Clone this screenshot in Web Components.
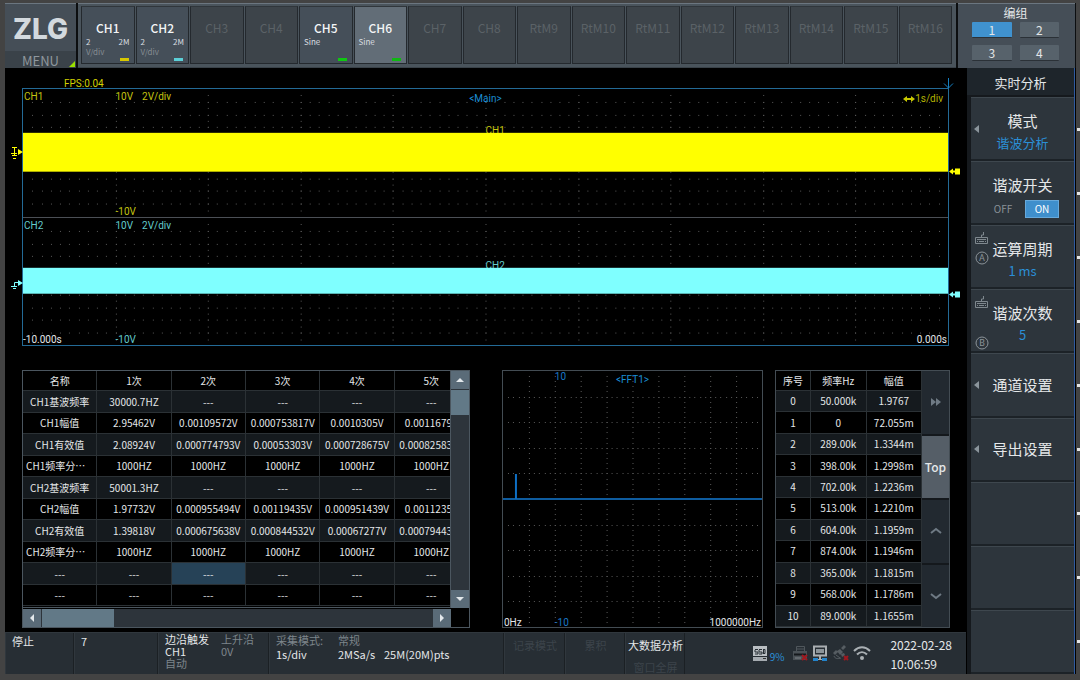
<!DOCTYPE html>
<html lang="zh-CN">
<head>
<meta charset="utf-8">
<meta name="viewport" content="width=device-width, initial-scale=1">
<title>示波器 - 实时分析</title>
<style>
  html, body { margin: 0; height: 100%; background: #434343; }
  body { font-family: "Noto Sans CJK SC", "Noto Sans", sans-serif; color: #e4e7e9; }
</style>
</head>
<body>
<scope-app></scope-app>

<script>
const BASE = `
  *, *::before, *::after { box-sizing: border-box; }
  :host { display: block; box-sizing: border-box; min-width: 0; }
  button { margin: 0; padding: 0; border: 0; background: none; color: inherit; font: inherit; cursor: pointer; }
  svg { display: block; }
`;

function define(tag, css, render) {
  customElements.define(tag, class extends HTMLElement {
    connectedCallback() {
      if (this.shadowRoot) return;
      const root = this.attachShadow({ mode: 'open' });
      root.innerHTML = `<style>${BASE}${css}</style>${render(this)}`;
    }
  });
}

/* ---------- header ---------- */
define('menu-logo', `
  :host { background: #454e57; border-top: 1px solid #6b7680; }
  button { display: flex; flex-direction: column; width: 100%; height: 100%; position: relative; }
  svg { flex: 1; width: 100%; min-height: 0; }
  span { width: 100%; height: 17px; line-height: 19px; background: #3a4249; color: #8f979d; font-size: 13px; }
  i { position: absolute; right: 1px; bottom: 1px; border: 3px solid #9be000; border-left-color: transparent; border-top-color: transparent; }
`, () => `
  <button type="button">
    <svg viewBox="0 0 71 47"><text x="8" y="35" font-family="Inter, sans-serif" font-weight="800" font-size="28" fill="#d3d9de">ZLG</text></svg>
    <span>MENU</span><i></i>
  </button>`);

define('channel-tab', `
  :host { flex: 1 1 0; }
  button { display: grid; grid-template-rows: 18px 10px 10px; width: 100%; height: 100%; padding: 12px 4px 0 4px;
    position: relative; background: #3d444a; border: 1px solid #24292e; border-top-color: #30363b; color: #5b6267; font-size: 12px; line-height: 18px; }
  b { font-weight: inherit; }
  .row { display: flex; justify-content: space-between; font-size: 8px; line-height: 10px; }
  .unit { color: #858d93; }
  :host([on]) button { background: #454f59; color: #f3f5f6; font-weight: 500; }
  :host([selected]) button { background: #626d77; }
  :host([on]) .row { color: #d9dde0; font-weight: 400; }
  :host([on]) .row.unit { color: #858d93; }
  i { position: absolute; right: 5px; bottom: 2px; width: 9px; height: 3px; }
`, el => {
  const a = n => el.getAttribute(n) || '';
  return `<button type="button"><b><slot></slot></b>
    <span class="row"><span>${a('value')}</span><span>${a('rate')}</span></span>
    <span class="row unit">${a('unit')}</span>
    ${a('color') ? `<i style="background:${a('color')}"></i>` : ''}</button>`;
});

define('channel-strip', `
  :host { display: flex; gap: 1px; padding: 2px 4px 3px 3px; background: #4a545c; border-top: 1px solid #6b7680; border-bottom: 1px solid #3a4249; }
`, () => {
  const live = [
    ['CH1', 'on value="2" rate="2M" unit="V/div" color="#d8c800"'],
    ['CH2', 'on value="2" rate="2M" unit="V/div" color="#5cd0d8"'],
    ['CH3', ''], ['CH4', ''],
    ['CH5', 'on value="Sine" color="#0fc812"'],
    ['CH6', 'on selected value="Sine" color="#0fb812"'],
    ['CH7', ''], ['CH8', '']
  ];
  for (let n = 9; n <= 16; n++) live.push([`RtM${n}`, '']);
  return live.map(([name, attrs]) => `<channel-tab ${attrs}>${name}</channel-tab>`).join('');
});

define('group-picker', `
  :host { background: #454e57; border-top: 1px solid #6b7680; padding: 0 16px 0 14px; text-align: center; }
  .title { font-size: 12px; line-height: 18px; }
  .grid { display: grid; grid-template-columns: 1fr 1fr; gap: 7px 8px; }
  button { height: 16px; font-size: 12px; line-height: 16px; background: #57626b; border-bottom: 1px solid #2b3137; border-radius: 1px; }
  button.on { background: #4092cf; }
`, () => `<div class="title">编组</div><div class="grid">
  <button type="button" class="on">1</button><button type="button">2</button>
  <button type="button">3</button><button type="button">4</button></div>`);

/* ---------- plots ---------- */
/* Dotted graticule: ten by ten divisions, drawn as single-pixel dots. */
function graticule(w, h, nx, ny, subX, subY) {
  let d = '';
  for (let r = 1; r < ny; r++)
    for (let c = 1; c < nx * subX; c++) d += `M${Math.round(c * w / (nx * subX))} ${Math.round(r * h / ny)}h1`;
  for (let c = 1; c < nx; c++)
    for (let r = 1; r < ny * subY; r++) d += `M${Math.round(c * w / nx)} ${Math.round(r * h / (ny * subY))}h1`;
  return `<path d="${d}" transform="translate(0 .5)" stroke="#5a5a5a" fill="none"/>`;
}

define('wave-pane', `
  :host { flex: 1 1 0; min-height: 0; position: relative; color: var(--ink); font: 10px/12px Roboto, sans-serif; }
  :host([divided]) { border-bottom: 1px solid #4b4f55; }
  svg.plot { position: absolute; inset: 0; width: 100%; height: 100%; }
  span { position: absolute; }
  .name { left: 1px; top: 2px; }
  .scale { left: 10%; top: 2px; display: flex; gap: 9px; }
  .scale span { position: static; }
  .min { left: 10%; bottom: -1px; } .mid { left: 50%; top: var(--mid); }
  .zero { position: absolute; left: -12px; top: var(--zero); }
  .level { position: absolute; right: -12px; top: var(--level); }
`, el => {
  const [y, h] = el.getAttribute('band').split(' ');
  const c = el.getAttribute('fill');
  const t = el.hasAttribute('trigger');
  return `<svg class="plot" viewBox="0 0 926 128" preserveAspectRatio="none">${graticule(926, 128, 10, 10, 10, 2)}</svg>
  <span class="mid">${el.id}</span>
  <svg class="plot" viewBox="0 0 926 128" preserveAspectRatio="none"><rect y="${y}" width="926" height="${h}" fill="${c}"/></svg>
  <span class="name">${el.id}</span><span class="scale"><span>10V</span><span>2V/div</span></span><span class="min">-10V</span>
  <svg class="zero" width="12" height="14" viewBox="0 0 12 14" fill="none" stroke="${c}">
    ${t ? '<path d="M1 1.500h5M3.500 1v8M1 9.500h5M0 7.500h6M2 12.500h3"/>' : '<path d="M3.500 9V5.500H8M0 9.500h6M2 11.500h3"/>'}
    <path d="M7 3v6l5-3z" fill="${c}" stroke="none"/></svg>
  <svg class="level" width="11" height="7" viewBox="0 0 11 7" fill="${c}"><path d="M0 3.500l4-3v2h2v2H4v2zM6 0.500h5v6H6z"/></svg>`;
});

define('wave-view', `
  :host { display: flex; flex-direction: column; position: relative; border: 1px solid #236a96; font: 10px/12px Roboto, sans-serif; }
  span, .mark { position: absolute; }
  .fps { left: 41px; top: -11px; color: #d2d200; }
  .main { left: 0; right: 0; top: 4px; text-align: center; color: #1b8fd6; }
  .base { right: 5px; top: 4px; color: #b4b400; display: flex; align-items: center; }
  .t0 { left: 0; bottom: -1px; } .t1 { right: 1px; bottom: -1px; }
  .mark { right: -6px; top: -12px; }
`, () => `
  <wave-pane id="CH1" divided trigger band="44 39" fill="#ffff00" style="--ink:#c4c410;--mid:36px;--zero:57px;--level:79px"></wave-pane>
  <wave-pane id="CH2" band="50 26" fill="#7fffff" style="--ink:#63cccc;--mid:42px;--zero:59px;--level:73px"></wave-pane>
  <span class="fps">FPS:0.04</span><span class="main">&lt;Main&gt;</span>
  <span class="base"><svg width="12" height="8" viewBox="0 0 12 8" fill="#c8c800"><path d="M0 4l4-3v2h4V1l4 3-4 3V5H4v2z"/></svg>1s/div</span>
  <span class="t0">-10.000s</span><span class="t1">0.000s</span>
  <svg class="mark" width="11" height="12" viewBox="0 0 11 12" fill="none" stroke="#1580c2"><path d="M5.500 1v10M1 6.500l4.500 4.500L10 6.500"/></svg>`);

define('fft-view', `
  :host { position: relative; border: 1px solid #434c53; font: 10px/12px Roboto, sans-serif; color: #1a78c8; }
  svg { position: absolute; inset: 0; width: 100%; height: 100%; }
  span { position: absolute; }
  .max { left: 20%; top: 0; } .min { left: 20%; bottom: -2px; }
  .name { left: 0; right: 0; top: 3px; text-align: center; color: #1b8fd6; }
  .f0 { left: 1px; bottom: -2px; color: #e4e7e9; } .f1 { right: 1px; bottom: -2px; color: #e4e7e9; }
`, () => `<svg viewBox="0 0 260 256" preserveAspectRatio="none">${graticule(260, 256, 10, 10, 5, 5)}
  <path d="M0 128h260" stroke="#0e5c9f" stroke-width="2"/><path d="M13 103v25" stroke="#0e6fc4" stroke-width="2"/></svg>
  <span class="max">10</span><span class="min">-10</span><span class="name">&lt;FFT1&gt;</span>
  <span class="f0">0Hz</span><span class="f1">1000000Hz</span>`);

/* ---------- tables ---------- */
const TABLE = `
  table { border-collapse: separate; border-spacing: 0; table-layout: fixed; font-size: 10px; line-height: 18px; text-align: center; white-space: nowrap; }
  th, td { padding: 0; font-weight: 400; border-right: 1px solid #2b3135; border-bottom: 1px solid #2b3135; overflow: hidden; }
  thead th { height: 20px; }
  tbody tr:nth-child(odd) { background: #151a1e; }
`;
const rowsOf = rows => rows.map(r => `<tr>${r.map((c, i) => i ? `<td>${c}</td>` : `<th scope="row">${c}</th>`).join('')}</tr>`).join('');

define('scroll-bar', `
  :host { display: flex; background: #2d343b; gap: 1px; }
  :host([vertical]) { flex-direction: column; width: 18px; }
  button { flex: 0 0 18px; background: #5a6b78; display: grid; place-items: center; }
  .track { flex: 1; display: flex; flex-direction: inherit; }
  .thumb { flex: 0 0 var(--thumb); background: #627987; }
`, el => {
  const v = el.hasAttribute('vertical');
  const tri = d => `<svg width="10" height="10" fill="#e3e8eb"><path d="${d}"/></svg>`;
  return `<button type="button" aria-label="后退">${tri(v ? 'M1 7l4-4 4 4z' : 'M7 1L3 5l4 4z')}</button>
  <div class="track"><div class="thumb"></div></div>
  <button type="button" aria-label="前进">${tri(v ? 'M1 3l4 4 4-4z' : 'M3 1l4 4-4 4z')}</button>`;
});

define('harmonic-table', TABLE + `
  :host { display: grid; grid-template: minmax(0, 1fr) 19px / minmax(0, 1fr) 18px; border: 1px solid #4b565f; }
  .view { overflow: hidden; border-right: 1px solid #4b565f; border-bottom: 1px solid #4b565f; }
  table { width: 104%; min-width: 446px; }
  tbody tr:nth-child(odd) > * { height: 22px; }
  tbody tr:nth-child(even) > * { height: 21px; }
  tbody tr:nth-child(4n) > th { text-align: left; padding-left: 3px; }
  tbody tr:nth-child(9) td:nth-child(3) { background: #264257; }
  scroll-bar { margin-top: 1px; } scroll-bar[vertical] { margin: 0; }
`, () => {
  const D = '---', K = '1000HZ';
  return `<div class="view"><table><thead><tr><th scope="col">名称</th>${[1, 2, 3, 4, 5].map(n => `<th scope="col">${n}次</th>`).join('')}</tr></thead><tbody>${rowsOf([
    ['CH1基波频率', '30000.7HZ', D, D, D, D],
    ['CH1幅值', '2.95462V', '0.00109572V', '0.000753817V', '0.0010305V', '0.0011679V'],
    ['CH1有效值', '2.08924V', '0.000774793V', '0.00053303V', '0.000728675V', '0.000825831V'],
    ['CH1频率分…', K, K, K, K, K],
    ['CH2基波频率', '50001.3HZ', D, D, D, D],
    ['CH2幅值', '1.97732V', '0.000955494V', '0.00119435V', '0.000951439V', '0.0011235V'],
    ['CH2有效值', '1.39818V', '0.000675638V', '0.000844532V', '0.00067277V', '0.000794432V'],
    ['CH2频率分…', K, K, K, K, K],
    [D, D, D, D, D, D], [D, D, D, D, D, D]
  ])}</tbody></table></div>
  <scroll-bar vertical style="--thumb:25px"></scroll-bar>
  <scroll-bar style="--thumb:72px"></scroll-bar>`;
});

define('peak-list', TABLE + `
  :host { display: grid; grid-template-columns: minmax(0, 1fr) 27px; border: 1px solid #434c53; }
  table { width: 100%; height: 100%; }
  .n { width: 24%; }
  nav { display: flex; flex-direction: column; gap: 2px; background: #14181c; }
  nav button { flex: 1; display: grid; place-items: center; background: #222930; font-size: 12px; font-weight: 500; }
  nav .top { background: #555e67; }
`, () => {
  const data = ['50.000k 1.9767', '0 72.055m', '289.00k 1.3344m', '398.00k 1.2998m', '702.00k 1.2236m', '513.00k 1.2210m',
    '604.00k 1.1959m', '874.00k 1.1946m', '365.00k 1.1815m', '568.00k 1.1786m', '89.000k 1.1655m'];
  const ic = (d, f) => `<svg width="12" height="12" fill="${f ? '#6f7a84' : 'none'}" stroke="${f ? 'none' : '#6f7a84'}" stroke-width="2"><path d="${d}"/></svg>`;
  return `<table><thead><tr><th class="n" scope="col">序号</th><th scope="col">频率Hz</th><th scope="col">幅值</th></tr></thead>
  <tbody>${rowsOf(data.map((s, i) => [i, ...s.split(' ')]))}</tbody></table>
  <nav><button type="button" aria-label="展开">${ic('M1 2l5 4-5 4zM6 2l5 4-5 4z', 1)}</button>
  <button type="button" class="top">Top</button>
  <button type="button" aria-label="上一页">${ic('M1 8l5-4 5 4')}</button>
  <button type="button" aria-label="下一页">${ic('M1 4l5 4 5-4')}</button></nav>`;
});

/* ---------- status bar ---------- */
define('status-cell', `
  :host { flex: 0 0 var(--w); padding: 1px 5px 0 6px; border-right: 1px solid #1b2024; border-left: 1px solid #30373d; font-size: 11px; line-height: 14px; white-space: nowrap; overflow: hidden; }
`, () => `<slot></slot>`);

define('status-bar', `
  :host { display: flex; background: #272e34; border-top: 1px solid #30373d; overflow: hidden; font-size: 11px; }
  .trig, .acq { display: grid; justify-content: start; }
  .trig { grid-template-columns: 56px auto; line-height: 12px; margin-top: -1px; }
  .acq { grid-template-columns: 62px 46px auto; margin-top: -1px; }
  .dim { color: #7d858b; } .off { color: #3c444b; }
  .cmd { display: flex; flex-direction: column; align-items: center; gap: 10px; padding-top: 5px; margin: 0 -5px; line-height: 12px; }
  .cmd button { line-height: 12px; }
  .tray { flex: 1; display: flex; justify-content: flex-end; gap: 4px; padding: 12px 14px 0 0; font-size: 10px; }
  .pct { color: #2c8fd6; margin: 6px 4px 0 -2px; line-height: 12px; }
  time { margin: -10px 0 0 15px; font-size: 12px; line-height: 19px; }
`, () => `
  <status-cell style="--w:69px">停止</status-cell>
  <status-cell style="--w:84px">7</status-cell>
  <status-cell style="--w:111px"><div class="trig"><span>边沿触发</span><span class="dim">上升沿</span><span>CH1</span><span class="dim">0V</span><span class="dim">自动</span></div></status-cell>
  <status-cell style="--w:235px"><div class="acq"><span class="dim">采集模式:</span><span class="dim">常规</span><span></span><span>1s/div</span><span>2MSa/s</span><span>25M(20M)pts</span></div></status-cell>
  <status-cell style="--w:61px"><div class="cmd off"><button type="button">记录模式</button></div></status-cell>
  <status-cell style="--w:60px"><div class="cmd off"><button type="button">累积</button></div></status-cell>
  <status-cell style="--w:60px"><div class="cmd"><button type="button">大数据分析</button><button type="button" class="off">窗口全屏</button></div></status-cell>
  <div class="tray">
    <svg width="16" height="17" viewBox="0 0 16 17"><path d="M1 1h14v10H1z" fill="#b9bec2"/><path d="M1 12h14v4H1z" fill="#a5abb0"/><path d="M3 4.500h3M3 5v2h3v2H3M7 4.500h3M7 5v2h3v2H7M11.500 4v5M11 4.500h2v4h-2" stroke="#272e34" fill="none"/><path d="M11 13.500h3" stroke="#333"/></svg>
    <span class="pct">9%</span>
    <svg width="16" height="17" viewBox="0 0 16 17" fill="none"><path d="M4.500 1.500h8v5h-8zM5 4h7" stroke="#50575c"/><path d="M1 6h14v9H1z" fill="#4a5156"/><path d="M2 9.500h12" stroke="#15191c" stroke-width="2"/><path d="M3 13h6" stroke="#7c8286"/><path d="M10 10l5 5M15 10l-5 5" stroke="#a0181f" stroke-width="2"/></svg>
    <svg width="16" height="17" viewBox="0 0 16 17" fill="none"><path d="M2 1.500h12v9H2z" stroke="#a9aeb1" stroke-width="2"/><path d="M4 4h8v4H4z" fill="#8c9499"/><path d="M8 11v3" stroke="#a9aeb1" stroke-width="2"/><path d="M1 14.500h5M10 14.500h5" stroke="#2384cc" stroke-width="3"/><path d="M6 14.500h4" stroke="#a9aeb1"/></svg>
    <svg width="17" height="17" viewBox="0 0 17 17"><path d="M1 8l3-3 2 2-3 3zM9 3l3-3 2 2-3 3zM5 6l3-2 3 3-3 3zM9 9l3-1 1 2-3 2z" fill="#565d62"/><path d="M2 11c1 3 4 3 7 2M4 10l4 3" stroke="#565d62" stroke-width="1" fill="none"/><path d="M12 11l4 4M16 11l-4 4" stroke="#a0181f" stroke-width="2"/></svg>
    <svg width="18" height="17" viewBox="0 0 18 17" fill="none" stroke="#aab0b4" stroke-width="2"><path d="M1 6c5-5 11-5 16 0M4 9.500c3-3 7-3 10 0"/><circle cx="9" cy="13" r="2" fill="#aab0b4" stroke="none"/></svg>
    <time datetime="2022-02-28T10:06:59">2022-02-28<br>10:06:59</time>
  </div>`);

/* ---------- side menu ---------- */
define('side-item', `
  :host { flex: 1 1 0; min-height: 0; position: relative; background: #2d353c; border-top: 1px solid #3e474e; border-bottom: 2px solid #1c2227; text-align: center; }
  .body { display: flex; flex-direction: column; justify-content: center; align-items: center; width: 100%; height: 100%; font-size: 15px; line-height: 22px; }
  .two { padding-top: 6px; }
  .val { font-size: 13px; color: #2b8fd6; }
  .arrow { position: absolute; left: 3px; top: 50%; margin-top: -4px; }
  .side { position: absolute; left: 4px; top: 6px; bottom: 1px; display: flex; flex-direction: column; gap: 7px; }
  .side.spread { justify-content: space-between; }
`, el => {
  const v = el.getAttribute('value'), k = el.getAttribute('knob'), sw = el.hasAttribute('switch');
  const tag = sw ? 'div' : 'button';
  const inner = `<slot></slot>${v ? `<span class="val">${v}</span>` : ''}${sw ? '<slot name="control"></slot>' : ''}`;
  return `<${tag} class="body ${v || sw ? 'two' : ''}" ${sw ? '' : 'type="button"'}>${inner}</${tag}>
  ${el.hasAttribute('arrow') ? '<svg class="arrow" width="5" height="8" fill="#8b959c"><path d="M5 0v8L0 4z"/></svg>' : ''}
  ${k ? `<div class="side ${k === 'B' ? 'spread' : ''}">
    <svg width="13" height="12" viewBox="0 0 13 12" fill="none" stroke="#7f888e"><path d="M.5 5.500h12v6H.5zM6.500 5V3h2V0M2 7.500h9" /><path d="M2 9.500h1M4 9.500h5M10 9.500h1"/></svg>
    <svg width="14" height="14" viewBox="0 0 14 14"><circle cx="7" cy="7" r="6" fill="none" stroke="#8b9399"/><text x="7" y="10" text-anchor="middle" font-size="9" font-family="Roboto, sans-serif" fill="#8b9399">${k}</text></svg></div>` : ''}`;
});

define('on-off', `
  :host { display: flex; gap: 5px; align-items: flex-end; height: 22px; }
  label { position: relative; width: 34px; height: 18px; font-size: 10px; line-height: 17px; color: #8a9298; }
  input { position: absolute; inset: 0; width: 100%; height: 100%; margin: 0; appearance: none; cursor: pointer; }
  label:has(:checked) { background: #3f8fcc; border: 1px solid #67a9db; line-height: 15px; color: #fff; }
`, () => `<label><input type="radio" name="s">OFF</label><label><input type="radio" name="s" checked>ON</label>`);

define('side-menu', `
  :host { display: flex; flex-direction: column; background: #15191d; border-right: 1px solid #2f5aa0; }
  h2 { margin: 0; height: 27px; flex: none; background: #1e252b; font-weight: 400; font-size: 13px; line-height: 29px; text-align: center; }
  .items { flex: 1; min-height: 0; display: flex; flex-direction: column; margin: 2px 0 0 4px; }
`, () => `<h2>实时分析</h2><div class="items">
  <side-item arrow value="谐波分析">模式</side-item>
  <side-item switch>谐波开关<on-off slot="control"></on-off></side-item>
  <side-item knob="A" value="1 ms">运算周期</side-item>
  <side-item knob="B" value="5">谐波次数</side-item>
  <side-item arrow>通道设置</side-item>
  <side-item arrow>导出设置</side-item>
  <side-item></side-item><side-item></side-item><side-item></side-item></div>`);

/* Printed marks on the casing, one beside each soft key. */
define('edge-ticks', `
  :host { display: flex; flex-direction: column; padding-top: 29px; }
  i { flex: 1; display: flex; align-items: center; }
  i::before { content: ""; width: 100%; height: 3px; background: #e6e6e6; }
`, () => '<i></i>'.repeat(9));

/* ---------- shell ---------- */
define('scope-app', `
  :host { display: grid; min-height: 100vh; padding: 3px 0 6px 5px; background: #434343;
    grid-template-columns: minmax(0, 1fr) 3px; grid-template-rows: 65px minmax(0, 1fr); column-gap: 1px; }
  header { display: grid; grid-template-columns: 71px minmax(0, 1fr) 117px; gap: 2px; background: #0c0e10; padding-right: 1px; }
  .work { grid-row: 2; display: grid; grid-template-columns: minmax(0, 1fr) 108px; background: #000; padding-right: 1px; }
  edge-ticks { grid-row: 2; grid-column: 2; }
  main { display: flex; flex-direction: column; min-width: 0; }
  wave-view { flex: 1 1 0; min-height: 258px; margin: 20px 18px 24px 17px; }
  .data { flex: 1 1 0; min-height: 258px; display: grid; grid-template: minmax(0, 1fr) / 448fr 32px 261fr 12px 175fr; margin: 0 17px 4px 17px; }
  fft-view { grid-column: 3; }
  peak-list { grid-column: 5; }
  status-bar { flex: none; height: 42px; margin-right: 1px; }
`, () => `
  <header><menu-logo></menu-logo><channel-strip></channel-strip><group-picker></group-picker></header>
  <div class="work">
    <main>
      <wave-view></wave-view>
      <div class="data"><harmonic-table></harmonic-table><fft-view></fft-view><peak-list></peak-list></div>
      <status-bar></status-bar>
    </main>
    <side-menu></side-menu>
  </div>
  <edge-ticks></edge-ticks>`);
</script>
</body>
</html>
